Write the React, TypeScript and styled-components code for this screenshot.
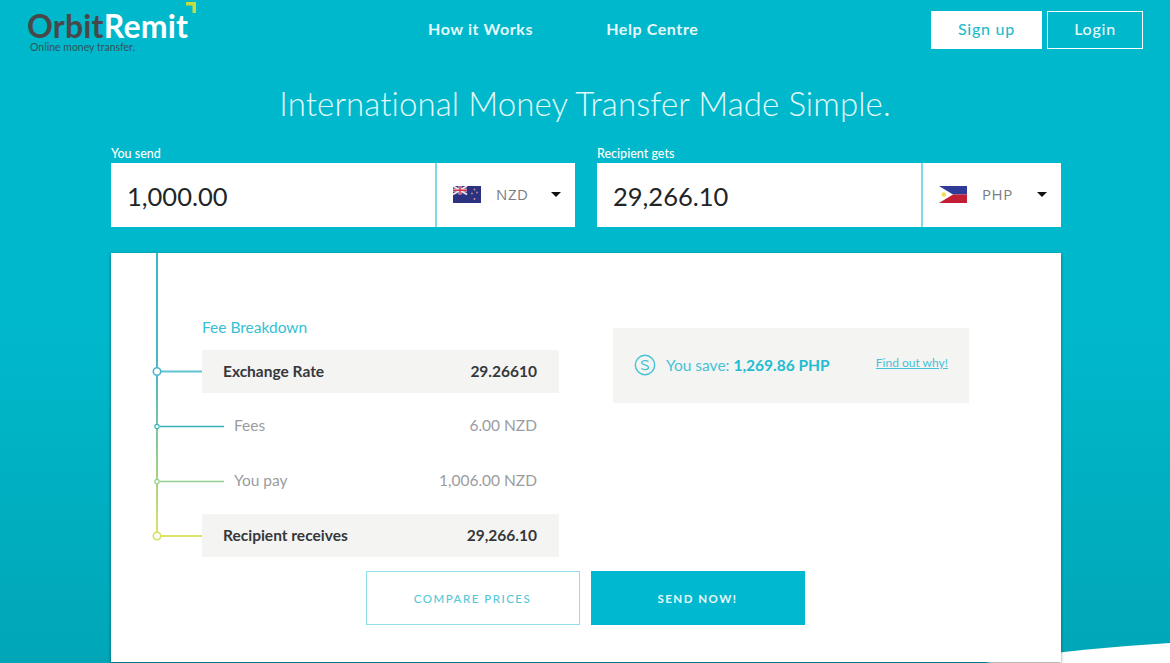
import React from "react";
import styled, { createGlobalStyle } from "styled-components";

const GlobalStyle = createGlobalStyle`
  html, body {
    margin: 0;
    padding: 0;
    height: 100%;
    font-family: Lato, "Open Sans", sans-serif;
  }
  * {
    box-sizing: border-box;
  }
`;

const Page = styled.div`
  position: relative;
  width: 100%;
  height: 663px;
  overflow: hidden;
  background: linear-gradient(#00b8cb 0%, #00b8cb 50%, #00a6b7 100%);
`;

const Wave = styled.svg`
  position: absolute;
  left: 0;
  bottom: 0;
  width: 1170px;
  height: 40px;
`;

const Content = styled.div`
  position: relative;
  display: flex;
  flex-direction: column;
  height: 100%;
`;

const Header = styled.header`
  display: flex;
  align-items: center;
  height: 60px;
  padding: 0 27px 0 28px;
`;

const Logo = styled.div`
  position: relative;
  width: 400px;
  height: 60px;
  padding-top: 11px;
`;

const LogoName = styled.div`
  font-size: 32px;
  line-height: 30px;
  font-weight: 700;
  letter-spacing: 0.2px;
  color: #ffffff;
  margin-left: -1px;

  span {
    color: #48484a;
  }
`;

const LogoTag = styled.div`
  font-size: 10.5px;
  line-height: 12px;
  color: #33535c;
  margin-left: 2px;
`;

const LogoCorner = styled.svg`
  position: absolute;
  left: 157px;
  top: 1px;
  width: 12px;
  height: 13px;
`;

const Nav = styled.nav`
  display: flex;
  gap: 73px;
  flex: 1;
  padding-bottom: 3px;
`;

const NavLink = styled.a`
  font-size: 16px;
  font-weight: 700;
  letter-spacing: 0.6px;
  color: #e6f8fa;
`;

const HeaderActions = styled.div`
  display: flex;
  gap: 5px;
`;

const HeaderButton = styled.a<{ $filled?: boolean; $width: number }>`
  display: flex;
  align-items: center;
  justify-content: center;
  width: ${(p) => p.$width}px;
  height: 38px;
  padding-bottom: 3px;
  font-size: 16px;
  font-weight: 500;
  letter-spacing: 0.75px;
  border: 1px solid #ffffff;
  background: ${(p) => (p.$filled ? "#ffffff" : "transparent")};
  color: ${(p) => (p.$filled ? "#1fbccd" : "#e6f8fa")};
`;

const Title = styled.h1`
  margin: 22px 0 0;
  font-size: 33px;
  line-height: 42px;
  font-weight: 300;
  letter-spacing: 0.08px;
  text-align: center;
  color: #e4f8fa;
`;

const Main = styled.main`
  width: 950px;
  margin: 0 0 0 111px;
`;

const Fields = styled.div`
  display: grid;
  grid-template-columns: 464px 464px;
  column-gap: 22px;
  margin-top: 22px;
`;

const FieldLabel = styled.label`
  display: block;
  height: 17px;
  font-size: 12.5px;
  line-height: 16px;
  font-weight: 500;
  color: #ffffff;
`;

const FieldBox = styled.div`
  display: flex;
  height: 64px;
  background: #ffffff;
`;

const Amount = styled.div`
  flex: 1;
  display: flex;
  align-items: center;
  padding: 2px 0 0 16px;
  font-size: 25.5px;
  color: #222426;
  border-right: 2px solid #7cdbe6;
`;

const CurrencySelect = styled.div`
  display: flex;
  align-items: center;
  width: 138px;
  padding: 0 0 2px 16px;
`;

const CurrencyCode = styled.span`
  margin-left: 15px;
  width: 55px;
  font-family: "Open Sans", sans-serif;
  font-size: 15px;
  letter-spacing: 0.6px;
  color: #7a7e84;
`;

const Caret = styled.span`
  width: 0;
  height: 0;
  border-left: 5px solid transparent;
  border-right: 5px solid transparent;
  border-top: 5px solid #111111;
`;

const Flag = styled.svg`
  width: 28px;
  height: 17px;
  flex: none;
`;

const Card = styled.section`
  height: 409px;
  margin-top: 26px;
  background: #ffffff;
  box-shadow: 0 1px 3px rgba(0, 0, 0, 0.45);
`;

const CardBody = styled.div`
  display: flex;
`;

const TimelineSvg = styled.svg`
  flex: none;
  width: 91px;
  height: 290px;
  overflow: visible;
`;

const Breakdown = styled.div`
  width: 357px;
  padding-top: 65px;
`;

const BreakdownTitle = styled.div`
  height: 32px;
  font-size: 15.5px;
  line-height: 19px;
  color: #34bfd3;
`;

const FeeRow = styled.div<{ $strong?: boolean }>`
  display: flex;
  align-items: center;
  justify-content: space-between;
  height: ${(p) => (p.$strong ? 43 : 55)}px;
  padding: 0 22px 2px ${(p) => (p.$strong ? 21 : 32)}px;
  font-size: 15.5px;
  background: ${(p) => (p.$strong ? "#f4f4f3" : "transparent")};
  font-weight: ${(p) => (p.$strong ? 700 : 400)};
  color: ${(p) => (p.$strong ? "#36383b" : "#9a9ca0")};
`;

const FeeGroup = styled.div`
  padding: 5.5px 0;
`;

const FeeValue = styled.span``;

const Actions = styled.div`
  display: flex;
  justify-content: center;
  gap: 11px;
  margin-top: 14px;
  padding-right: 2px;
`;

const ActionButton = styled.a<{ $primary?: boolean }>`
  display: flex;
  align-items: center;
  justify-content: center;
  width: 214px;
  height: 54px;
  font-size: 11.5px;
  font-weight: ${(p) => (p.$primary ? 700 : 500)};
  letter-spacing: 1.5px;
  border: 1px solid ${(p) => (p.$primary ? "#00b8cf" : "#8fe0ea")};
  background: ${(p) => (p.$primary ? "#00b8cf" : "#ffffff")};
  color: ${(p) => (p.$primary ? "#e8f9fb" : "#55c8da")};
`;

const SavingsColumn = styled.div`
  padding: 75px 0 0 54px;
`;

const SavingsBox = styled.div`
  display: flex;
  align-items: center;
  width: 356px;
  height: 75px;
  padding: 0 21px 2px;
  background: #f4f4f3;
  color: #45c2d6;
`;

const SaveIcon = styled.svg`
  width: 22px;
  height: 22px;
  flex: none;
`;

const SaveText = styled.span`
  margin-left: 10px;
  flex: 1;
  font-size: 15.5px;

  strong {
    font-weight: 700;
    color: #22bcd2;
  }
`;

const WhyLink = styled.a`
  font-size: 12px;
  color: #45c2d6;
  text-decoration: underline;
  position: relative;
  top: -2px;
`;

const NzFlag = () => (
  <Flag viewBox="0 0 28 17">
    <rect width="28" height="17" fill="#2b3380" />
    <rect width="14" height="8.5" fill="#3c4590" />
    <path d="M0 0 14 8.5M14 0 0 8.5" stroke="#f2e4ea" strokeWidth="1.8" />
    <path d="M7 0v8.5M0 4.2h14" stroke="#f2e4ea" strokeWidth="2.8" />
    <path d="M7 0v8.5M0 4.2h14" stroke="#d8354a" strokeWidth="1.5" />
    <circle cx="21.5" cy="3.5" r="0.9" fill="#c98a9a" />
    <circle cx="19" cy="7.5" r="0.9" fill="#c98a9a" />
    <circle cx="24" cy="6.5" r="0.9" fill="#c98a9a" />
    <circle cx="21.5" cy="13" r="1" fill="#c98a9a" />
  </Flag>
);

const PhFlag = () => (
  <Flag viewBox="0 0 28 17">
    <rect width="28" height="8.5" fill="#2f3b96" />
    <rect y="8.5" width="28" height="8.5" fill="#c21f37" />
    <path d="M0 0 14 8.5 0 17Z" fill="#ffffff" />
    <circle cx="4.8" cy="8.5" r="2.3" fill="#f5d94e" />
  </Flag>
);

const Timeline = () => (
  <TimelineSvg viewBox="0 0 91 290" aria-hidden="true">
    <defs>
      <linearGradient id="rail" x1="0" y1="0" x2="0" y2="1">
        <stop offset="0" stopColor="#3db5c9" />
        <stop offset="0.42" stopColor="#4bb9c6" />
        <stop offset="0.7" stopColor="#8ccb90" />
        <stop offset="1" stopColor="#dbe36a" />
      </linearGradient>
    </defs>
    <rect x="45" y="0" width="2" height="283" fill="url(#rail)" />
    <path d="M50 118.5H91" stroke="#5fc3d2" strokeWidth="2" />
    <path d="M49 173.5H113" stroke="#35b3b8" strokeWidth="1.5" />
    <path d="M49 228.5H113" stroke="#93cf8d" strokeWidth="1.5" />
    <path d="M50 283H91" stroke="#dbe36a" strokeWidth="2" />
    <circle cx="46" cy="118.5" r="3.7" fill="#fff" stroke="#45b7c8" strokeWidth="1.6" />
    <circle cx="46" cy="173.5" r="2.2" fill="#fff" stroke="#3fb5b5" strokeWidth="1.2" />
    <circle cx="46" cy="228.5" r="2.2" fill="#fff" stroke="#93cf8d" strokeWidth="1.2" />
    <circle cx="46" cy="283" r="3.7" fill="#fff" stroke="#d6e05f" strokeWidth="1.6" />
  </TimelineSvg>
);

export default function App() {
  return (
    <>
      <GlobalStyle />
      <Page>
        <Wave viewBox="0 0 1170 40" preserveAspectRatio="none" aria-hidden="true">
          <path d="M985 40Q1060 27 1170 20V40Z" fill="#ffffff" />
        </Wave>
        <Content>
          <Header>
            <Logo>
              <LogoName>
                <span>Orbit</span>Remit
              </LogoName>
              <LogoTag>Online money transfer.</LogoTag>
              <LogoCorner viewBox="0 0 12 13" aria-hidden="true">
                <path d="M1 1H11V12H7.5V4.5H1Z" fill="#c6dc3c" />
              </LogoCorner>
            </Logo>
            <Nav>
              <NavLink>How it Works</NavLink>
              <NavLink>Help Centre</NavLink>
            </Nav>
            <HeaderActions>
              <HeaderButton $filled $width={111}>
                Sign up
              </HeaderButton>
              <HeaderButton $width={96}>Login</HeaderButton>
            </HeaderActions>
          </Header>
          <Title>International Money Transfer Made Simple.</Title>
          <Main>
            <Fields>
              <div>
                <FieldLabel>You send</FieldLabel>
                <FieldBox>
                  <Amount>1,000.00</Amount>
                  <CurrencySelect>
                    <NzFlag />
                    <CurrencyCode>NZD</CurrencyCode>
                    <Caret />
                  </CurrencySelect>
                </FieldBox>
              </div>
              <div>
                <FieldLabel>Recipient gets</FieldLabel>
                <FieldBox>
                  <Amount>29,266.10</Amount>
                  <CurrencySelect>
                    <PhFlag />
                    <CurrencyCode>PHP</CurrencyCode>
                    <Caret />
                  </CurrencySelect>
                </FieldBox>
              </div>
            </Fields>
            <Card>
              <CardBody>
                <Timeline />
                <Breakdown>
                  <BreakdownTitle>Fee Breakdown</BreakdownTitle>
                  <FeeRow $strong>
                    Exchange Rate
                    <FeeValue>29.26610</FeeValue>
                  </FeeRow>
                  <FeeGroup>
                    <FeeRow>
                      Fees
                      <FeeValue>6.00 NZD</FeeValue>
                    </FeeRow>
                    <FeeRow>
                      You pay
                      <FeeValue>1,006.00 NZD</FeeValue>
                    </FeeRow>
                  </FeeGroup>
                  <FeeRow $strong>
                    Recipient receives
                    <FeeValue>29,266.10</FeeValue>
                  </FeeRow>
                </Breakdown>
                <SavingsColumn>
                  <SavingsBox>
                    <SaveIcon viewBox="0 0 22 22" aria-hidden="true">
                      <circle cx="11" cy="11" r="9.7" fill="none" stroke="#45c2d6" strokeWidth="1.4" />
                      <path
                        d="M14.5 7.6C13.6 6.3 8 5.8 7.8 8.5 7.6 11.4 14.6 10.4 14.5 13.5 14.4 16.3 8.6 16 7.4 14.4"
                        fill="none"
                        stroke="#45c2d6"
                        strokeWidth="1.3"
                      />
                    </SaveIcon>
                    <SaveText>
                      You save: <strong>1,269.86 PHP</strong>
                    </SaveText>
                    <WhyLink>Find out why!</WhyLink>
                  </SavingsBox>
                </SavingsColumn>
              </CardBody>
              <Actions>
                <ActionButton>COMPARE PRICES</ActionButton>
                <ActionButton $primary>SEND NOW!</ActionButton>
              </Actions>
            </Card>
          </Main>
        </Content>
      </Page>
    </>
  );
}
